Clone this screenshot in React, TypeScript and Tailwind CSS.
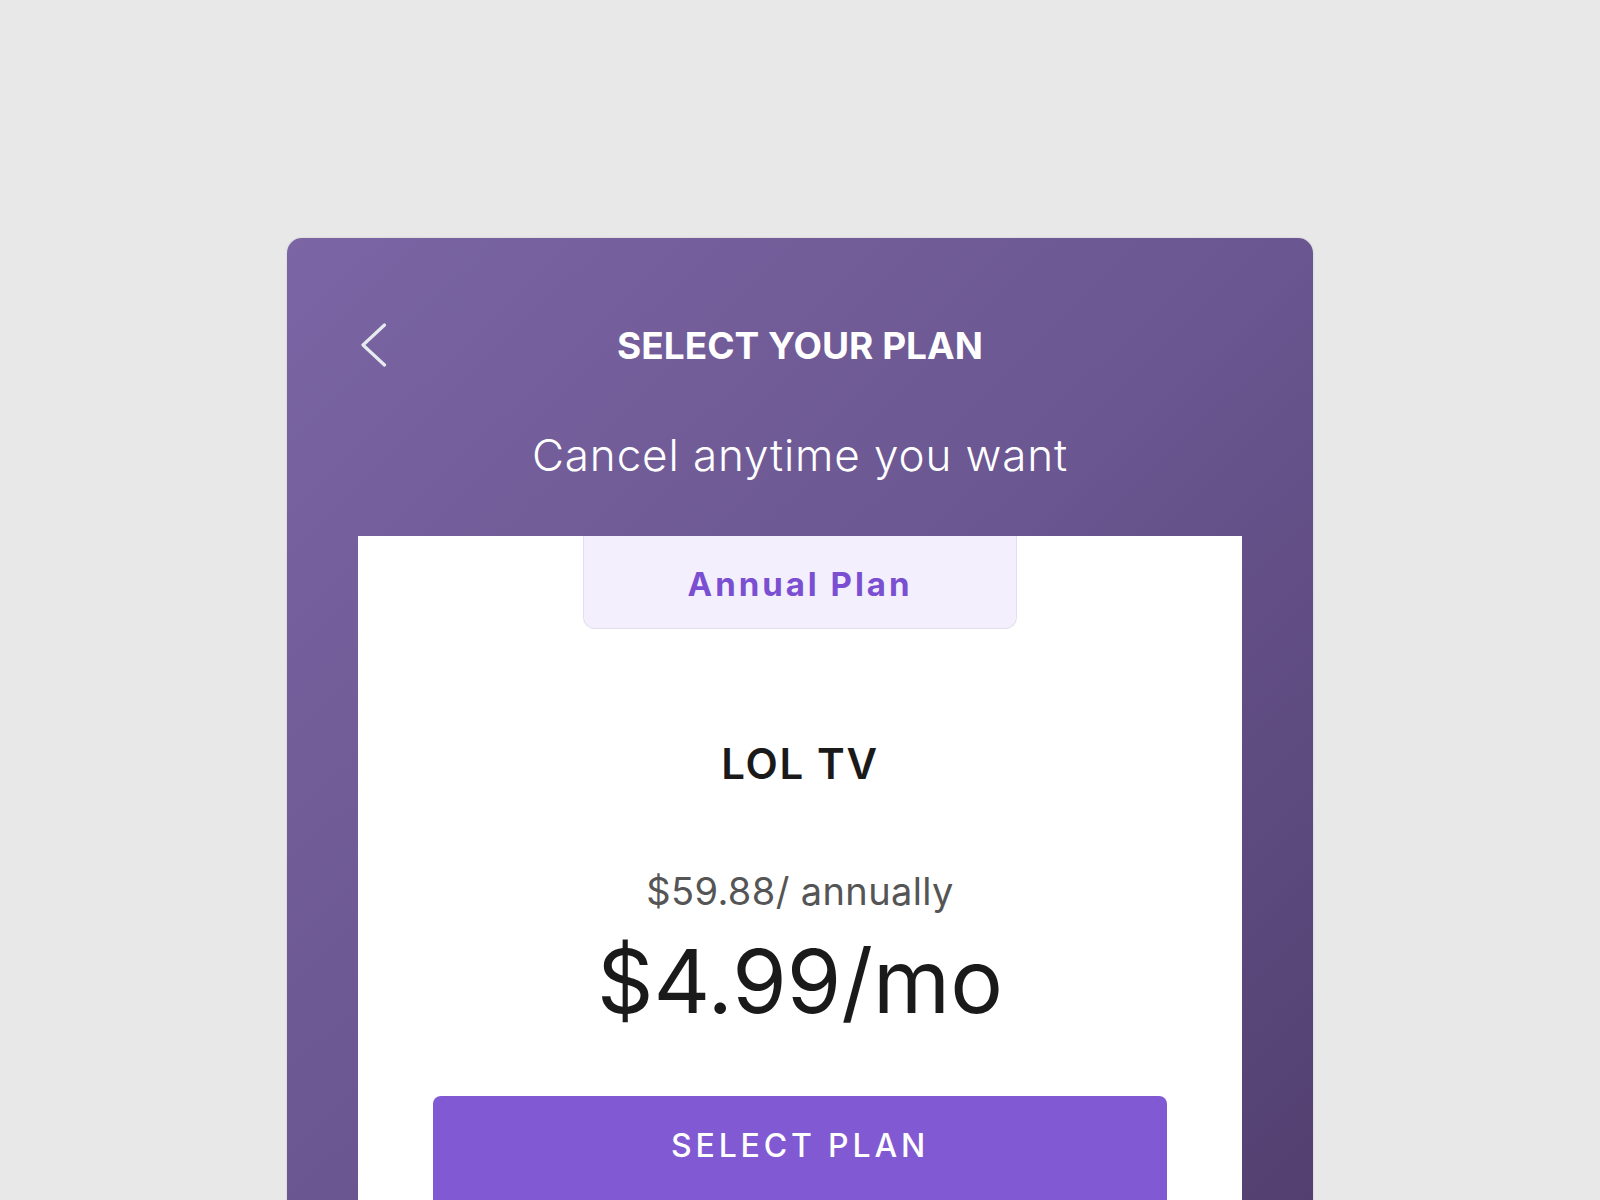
import React from "react";

export default function App() {
  return (
    <div className="min-h-[1200px] w-full bg-[#e8e8e8] overflow-hidden" style={{ fontFamily: "Inter, 'Noto Sans', sans-serif" }}>
      <div className="h-[1200px] overflow-hidden pt-[238px] pl-[287px]">
        <div className="w-[1026px] h-[1000px] rounded-t-[15px] bg-gradient-to-br from-[#7b65a4] via-[#6a5690] to-[#523f6f] shadow-[0_0_2px_rgba(0,0,0,0.15)] flex flex-col">
          <div className="grid grid-cols-[1fr_auto_1fr] items-center pt-[85px] px-[73px]">
            <div className="flex items-center">
              <svg width="27" height="44" viewBox="0 0 27 44" fill="none">
                <path d="M24.5 2 L3 22 L24.5 42" stroke="#e6ebef" strokeWidth="3.2" strokeLinecap="round" strokeLinejoin="round" />
              </svg>
            </div>
            <h1 className="text-[37px] leading-none font-bold text-white tracking-[0em]">SELECT YOUR PLAN</h1>
            <div />
          </div>
          <p className="mt-[66px] text-center text-[44px] leading-none font-light text-white tracking-[0.02em]">Cancel anytime you want</p>
          <div className="mt-[59px] mx-[71px] bg-white flex-1 flex flex-col items-center">
            <div className="w-[434px] h-[93px] pt-[5px] bg-[#f3effc] border border-t-0 border-[#e3dfee] rounded-b-[12px] flex items-center justify-center">
              <span className="text-[33px] leading-none font-bold text-[#7a4fd1] tracking-[0.09em]">Annual Plan</span>
            </div>
            <div className="mt-[114px] text-[42px] leading-none font-semibold text-[#1a1a1a] tracking-[0.04em]">LOL TV</div>
            <div className="mt-[87px] text-[38px] leading-none font-normal text-[#555555] tracking-[0.01em]">$59.88/ annually</div>
            <div className="mt-[27px] text-[88px] leading-none font-normal text-[#1a1a1a]">$4.99/mo</div>
            <button className="mt-[71px] w-[734px] h-[130px] pt-[34px] rounded-[8px] bg-[#8159d2] text-white text-[32px] leading-none font-medium tracking-[0.12em] flex items-start justify-center">
              SELECT PLAN
            </button>
          </div>
        </div>
      </div>
    </div>
  );
}
